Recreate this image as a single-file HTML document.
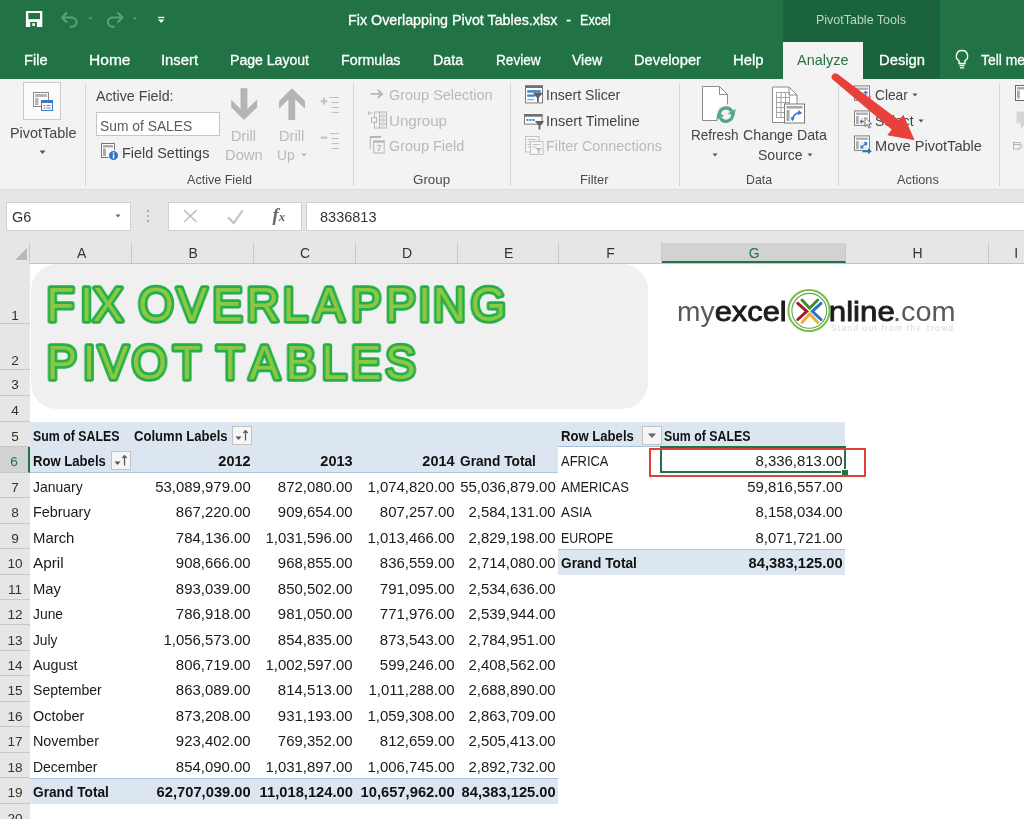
<!DOCTYPE html>
<html><head><meta charset="utf-8"><title>Fix Overlapping Pivot Tables.xlsx - Excel</title>
<style>
html,body{margin:0;padding:0;}
body{width:1024px;height:819px;overflow:hidden;position:relative;background:#fff;font-family:"Liberation Sans",sans-serif;color:#222;}
.a{position:absolute;white-space:nowrap;}
.sep{position:absolute;top:83px;width:1px;height:102.5px;background:#d6d6d6;}
.ch{position:absolute;top:243px;height:19.5px;line-height:21.5px;padding-left:2px;font-size:14px;color:#333;text-align:center;border-right:1px solid #c8c8c8;box-sizing:border-box;}
.rh{position:absolute;left:0;width:30px;text-align:center;font-size:13.6px;color:#333;border-bottom:1px solid #c8c8c8;box-sizing:border-box;background:#e6e6e6;}
.c{position:absolute;font-size:14.5px;line-height:26px;height:26px;white-space:nowrap;color:#1a1a1a;}
.r{text-align:right;}
.b{font-weight:bold;color:#111;}
.band{position:absolute;background:#dce6f1;}
</style></head><body><div id="app" style="position:absolute;left:0;top:0;width:1024px;height:819px;overflow:hidden;will-change:transform;">

<div class="a" style="left:0;top:0;width:1024px;height:78.500px;background:#217346"></div>
<div class="a" style="left:782.500px;top:0;width:157.500px;height:78.500px;background:#1a633c"></div>
<div class="a" style="left:782.500px;top:41.700px;width:80.500px;height:37.300px;background:#f3f3f3"></div>
<svg class="a" style="left:20px;top:6px" width="150" height="26" viewBox="20 6 150 26">
<rect x="25.900" y="11" width="16.400" height="16" fill="#fff"/><rect x="28.300" y="13" width="11.700" height="6.200" fill="#217346"/><rect x="30.200" y="22" width="6.700" height="5" fill="#217346"/><rect x="32.300" y="23.200" width="2.600" height="2.700" fill="#fff"/>
<g fill="none" stroke="#5f9f7d" stroke-width="2" stroke-linecap="round" stroke-linejoin="round"><path d="M66.500 13l-4.500 4.500 4.500 4.500"/><path d="M62.500 17.500h9.500a4.600 4.600 0 0 1 0 9.200h-1.500"/>
<path d="M118 13l4.500 4.500-4.500 4.500"/><path d="M122 17.500h-9.500a4.600 4.600 0 0 0 0 9.200h1.500"/></g>
<path d="M88.300 17.500h4.200l-2.100 2.300z" fill="#5f9f7d"/><path d="M132.900 17.500h4.200l-2.100 2.300z" fill="#5f9f7d"/>
<rect x="158" y="16.800" width="6.400" height="1.300" fill="#fff"/><path d="M158 19.500h6.400l-3.200 3.500z" fill="#fff"/>
</svg>
<svg class="a" style="left:953px;top:48px" width="18" height="24" viewBox="0 0 18 24"><path d="M9 2.500a5.500 5.500 0 0 0-3 10.200v2.800h6v-2.800a5.500 5.500 0 0 0-3-10.200z" fill="none" stroke="#fff" stroke-width="1.400"/><path d="M6.500 17.500h5M7 19.800h4" stroke="#fff" stroke-width="1.300"/></svg>
<div class="a" style="left:0;top:78.500px;width:1024px;height:110.500px;background:#f3f3f3"></div>
<div class="a" style="left:0;top:188.500px;width:1024px;height:1px;background:#dcdcdc"></div>
<div class="a" style="left:0;top:189.500px;width:1024px;height:74px;background:#e6e6e6"></div>
<div class="sep" style="left:85px"></div>
<div class="sep" style="left:352.5px"></div>
<div class="sep" style="left:509.5px"></div>
<div class="sep" style="left:679px"></div>
<div class="sep" style="left:838px"></div>
<div class="sep" style="left:998.5px"></div>
<div class="a" style="left:23.300px;top:82.200px;width:37.400px;height:37.400px;border:1px solid #cbcbcb;background:#fbfbfb;box-sizing:border-box"></div>
<svg class="a" style="left:32px;top:91px" width="22" height="22" viewBox="0 0 22 22"><rect x="1.500" y="1.500" width="15" height="14" fill="#fff" stroke="#8a8a8a"/><rect x="3" y="3" width="12" height="3" fill="#b5b5b5"/><rect x="3" y="7" width="3.500" height="7" fill="#b5b5b5"/><rect x="9.500" y="9.500" width="11" height="10" fill="#fff" stroke="#3b78c4"/><rect x="9.500" y="9.500" width="11" height="2.500" fill="#3b78c4"/><path d="M11.500 14.500h2M14.500 14.500h4M11.500 17h2M14.500 17h4" stroke="#7a7a7a"/></svg>
<svg class="a" style="left:39px;top:150px" width="8" height="5"><path d="M0.500 0.500h6l-3 3.500z" fill="#555"/></svg>
<div class="a" style="left:96px;top:112px;width:124px;height:24px;border:1px solid #c6c6c6;background:#fff;box-sizing:border-box"></div>
<svg class="a" style="left:100px;top:142px" width="20" height="20" viewBox="0 0 20 20"><rect x="1.500" y="1.500" width="13" height="14" fill="#fff" stroke="#777"/><rect x="3" y="3" width="10" height="2.500" fill="#aaa"/><rect x="3" y="6.500" width="3" height="7.500" fill="#aaa"/><circle cx="13.500" cy="13.500" r="5" fill="#2f74c0" stroke="#fff"/><rect x="12.800" y="12.500" width="1.500" height="4" fill="#fff"/><rect x="12.800" y="10.300" width="1.500" height="1.500" fill="#fff"/></svg>
<svg class="a" style="left:225px;top:84px" width="90" height="40" viewBox="225 84 90 40"><polygon points="240.5,88.2 247.4,88.2 247.4,108.9 257.1,99.5 257.1,107.3 244.0,120.0 231.2,107.3 231.2,99.5 240.5,108.9" fill="#b4b4b4"/><polygon points="288.4,120.0 295.2,120.0 295.2,99.3 305.0,108.7 305.0,100.9 291.9,88.2 279.1,100.9 279.1,108.7 288.4,99.3" fill="#b4b4b4"/></svg>
<svg class="a" style="left:300.800px;top:153px" width="8" height="5"><path d="M0.500 0.500h5l-2.500 3z" fill="#b5b5b5"/></svg>
<svg class="a" style="left:318px;top:92px" width="24" height="60" viewBox="318 92 24 60"><g stroke="#c0c0c0" fill="none"><path d="M320.700 101.300h6.600M324 98v6.600" stroke-width="2"/><path d="M329.500 97.500h9.500M331.500 102.500h7.500M331.500 107.500h7.500M331.500 112.500h7.500"/><path d="M320.700 137.600h6.600" stroke-width="2"/><path d="M329.500 133.500h9.500M331.500 138.500h7.500M331.500 143.500h7.500M331.500 148.500h7.500"/></g></svg>
<svg class="a" style="left:364px;top:84px" width="28" height="74" viewBox="364 84 28 74"><g fill="none" stroke="#b6b6b6"><path d="M370.500 93.900h10.500M377.800 89.900l4.200 4-4.200 4" stroke-width="1.900"/><rect x="374.500" y="112" width="12" height="16"/><path d="M379.500 112v16M379.500 116h7M379.500 120h7M379.500 124h7"/><path d="M381.500 114h3M381.500 118h3M381.500 122h3M381.500 126h3" stroke-width=".7"/><rect x="371.500" y="117.700" width="5" height="4.600" fill="#f3f3f3"/><path d="M368 113h4.500M369.800 111.200l-1.800 1.800 1.800 1.800"/><path d="M370.300 149v-12h10.500"/><path d="M370 137h11" stroke-width="2"/><rect x="373.700" y="141" width="10.500" height="12"/><path d="M373.500 141.700h11" stroke-width="2"/></g><text x="379" y="151.300" font-size="8.500" font-weight="bold" text-anchor="middle" fill="#b0b0b0" font-family="Liberation Sans, sans-serif">7</text></svg>
<svg class="a" style="left:520px;top:82px" width="28" height="76" viewBox="520 82 28 76"><rect x="525.500" y="85.900" width="17" height="17" fill="#fff" stroke="#7a7a7a"/><rect x="525" y="85.400" width="18" height="2.600" fill="#707070"/><rect x="527.200" y="90.200" width="13.500" height="2.400" fill="#3d7fc9"/><rect x="527.200" y="94.500" width="8" height="2.200" fill="#3d7fc9"/><rect x="527.200" y="98.800" width="7" height="1.600" fill="#8db4e0"/><path d="M532.800 92.700h10.200l-4.200 5v4.600h-1.800v-4.600z" fill="#606060"/>
<rect x="524.500" y="114.600" width="17.500" height="9.500" fill="#fff" stroke="#7a7a7a"/><rect x="524" y="114.100" width="18.500" height="2.600" fill="#707070"/><path d="M526.500 120h2M529.500 120h2M532.500 120h2" stroke="#3d7fc9" stroke-width="1.800"/><path d="M534.800 121h9.400l-3.800 4.400v4h-1.800v-4z" fill="#606060"/>
<g fill="#f7f7f7" stroke="#c2c2c2"><rect x="525.500" y="136.500" width="13.500" height="15.500"/><path d="M527.500 139.500h9M527.500 142h3M527.500 144.500h3M527.500 147h3" fill="none"/><rect x="530.500" y="141.500" width="12.500" height="13"/></g><path d="M532.500 144.500h8M532.500 147h4" stroke="#c2c2c2" fill="none"/><path d="M535.500 148h6.500l-2.600 3v2.800h-1.300v-2.800z" fill="#bdbdbd"/></svg>
<svg class="a" style="left:695px;top:82px" width="120" height="46" viewBox="695 82 120 46"><path d="M702.500 86.500h17l8 8v26h-25z" fill="#fff" stroke="#8c8c8c"/><path d="M719.500 86.500v8h8" fill="none" stroke="#8c8c8c"/><circle cx="726.0" cy="114.6" r="10.500" fill="#f3f3f3"/><g fill="none" stroke="#52a78a" stroke-width="3.200"><path d="M719.4 114.0A6.6 6.6 0 0 1 731.7 111.3"/><path d="M732.6 115.2A6.6 6.6 0 0 1 720.3 117.9"/></g><path d="M735.7 109.0L727.7 113.6L734.5 116.1z" fill="#52a78a"/><path d="M716.3 120.2L724.3 115.6L717.5 113.1z" fill="#52a78a"/>
<path d="M772.500 87h16.500l8 8v27.500h-24.500z" fill="#fff" stroke="#8c8c8c"/><path d="M789 87v8h8" fill="none" stroke="#8c8c8c"/><g stroke="#a5a5a5" fill="none"><rect x="776.500" y="92.500" width="13" height="25"/><path d="M776.500 97.500h13M776.500 102.500h13M776.500 107.500h13M776.500 112.500h13M781 92.500v25M785.500 92.500v25"/></g><rect x="784.500" y="104" width="20" height="19" fill="#fff" stroke="#7a7a7a"/><rect x="786.500" y="106" width="16" height="2.600" fill="#a8a8a8"/><rect x="786.500" y="110" width="3" height="11" fill="#a8a8a8"/><path d="M792.500 119.500c0.500-4.500 4-7 8-6.500" fill="none" stroke="#3477c6" stroke-width="1.700"/><path d="M798.500 110l3.800 3.200-4.600 1.900z M790.400 117.200l4.300 0.600-2.400 3.800z" fill="#3477c6"/></svg>
<svg class="a" style="left:712.300px;top:153.400px" width="8" height="5"><path d="M0.500 0.500h5l-2.500 3z" fill="#555"/></svg>
<svg class="a" style="left:807px;top:153px" width="8" height="5"><path d="M0.500 0.500h5l-2.500 3z" fill="#555"/></svg>
<svg class="a" style="left:853.3px;top:84.5px" width="22" height="22" viewBox="0 0 22 22"><rect x="1.500" y="0.900" width="15" height="14.500" fill="#fbfbfb" stroke="#808080"/><rect x="3" y="2.600" width="12" height="2.300" fill="#b0b0b0"/><rect x="3" y="6" width="2.800" height="8" fill="#b0b0b0"/><path d="M7 8h8M7 10.500h8M7 13h8" stroke="#d4d4d4" stroke-width=".8"/><path d="M12.700 11V6.500M10.800 8.300l1.900-1.900 1.900 1.900" fill="none" stroke="#3a7bc8" stroke-width="1.200"/><path d="M15.500 11l2.500 2.500M18 11l-2.500 2.500" stroke="#e06a86" stroke-width="1.200"/></svg>
<svg class="a" style="left:853.3px;top:110.3px" width="22" height="22" viewBox="0 0 22 22"><rect x="1.500" y="0.900" width="15" height="14.500" fill="#fbfbfb" stroke="#808080"/><rect x="3" y="2.600" width="12" height="2.300" fill="#b0b0b0"/><rect x="3" y="6" width="2.800" height="8" fill="#b0b0b0"/><path d="M7 8h8M7 10.500h8M7 13h8" stroke="#d4d4d4" stroke-width=".8"/><path d="M7.500 11.500h3.500M9.300 9.700l-1.800 1.800 1.800 1.800" fill="none" stroke="#3a7bc8" stroke-width="1.200"/><path d="M12 7.500v9l2.200-2 1.700 3.600 1.500-.7-1.700-3.500h3z" fill="#fff" stroke="#666" stroke-width=".9"/></svg>
<svg class="a" style="left:853.3px;top:135.2px" width="22" height="22" viewBox="0 0 22 22"><rect x="1.500" y="0.900" width="15" height="14.500" fill="#fbfbfb" stroke="#808080"/><rect x="3" y="2.600" width="12" height="2.300" fill="#b0b0b0"/><rect x="3" y="6" width="2.800" height="8" fill="#b0b0b0"/><path d="M7 8h8M7 10.500h8M7 13h8" stroke="#d4d4d4" stroke-width=".8"/><path d="M8 13l5.500-5.500M8 10.500v2.500h2.500M11 7.500h2.500v2.500" fill="none" stroke="#3a7bc8" stroke-width="1.200"/><path d="M9.500 16.300h7" stroke="#2e75b6" stroke-width="2"/><path d="M15 13.300l3.800 3-3.800 3z" fill="#2e75b6"/></svg>
<svg class="a" style="left:912.200px;top:93px" width="8" height="5"><path d="M0.500 0.500h5l-2.500 3z" fill="#555"/></svg>
<svg class="a" style="left:918px;top:118.700px" width="8" height="5"><path d="M0.500 0.500h5l-2.500 3z" fill="#555"/></svg>
<svg class="a" style="left:1010px;top:82px" width="14" height="72" viewBox="1010 82 14 72"><rect x="1015.500" y="85.500" width="14" height="15" fill="#fff" stroke="#666"/><rect x="1017" y="87" width="10" height="2.500" fill="#aaa"/><rect x="1017" y="90.500" width="2.800" height="8" fill="#aaa"/><rect x="1016.500" y="111.500" width="9" height="12" fill="#d6d6d6"/><path d="M1021 123.500v5l4-5z" fill="#c9c9c9"/><rect x="1013.500" y="142.500" width="6.500" height="6.500" fill="#f3f3f3" stroke="#b5b5b5"/><path d="M1013.500 144.500h6.500" stroke="#b5b5b5"/><path d="M1022 144v4" stroke="#c5c5c5"/></svg>
<div class="a" style="left:348.1px;top:9.9px;font-size:14.4px;line-height:20px;color:#fff;-webkit-text-stroke:0.3px #fff;transform:scaleX(0.993);transform-origin:left center;">Fix Overlapping Pivot Tables.xlsx</div>
<div class="a" style="left:566.3px;top:9.9px;font-size:14.4px;line-height:20px;color:#fff;-webkit-text-stroke:0.3px #fff;">-</div>
<div class="a" style="left:579.6px;top:9.9px;font-size:14.4px;line-height:20px;color:#fff;-webkit-text-stroke:0.3px #fff;transform:scaleX(0.875);transform-origin:left center;">Excel</div>
<div class="a" style="left:816.3px;top:9.8px;font-size:12.6px;line-height:20px;color:#bcd5c6;transform:scaleX(0.991);transform-origin:left center;">PivotTable Tools</div>
<div class="a" style="left:24.3px;top:49.8px;font-size:15px;line-height:20px;color:#fff;-webkit-text-stroke:0.3px #fff;transform:scaleX(0.972);transform-origin:left center;">File</div>
<div class="a" style="left:88.8px;top:49.8px;font-size:15px;line-height:20px;color:#fff;-webkit-text-stroke:0.3px #fff;transform:scaleX(1.037);transform-origin:left center;">Home</div>
<div class="a" style="left:161.3px;top:49.8px;font-size:15px;line-height:20px;color:#fff;-webkit-text-stroke:0.3px #fff;transform:scaleX(0.986);transform-origin:left center;">Insert</div>
<div class="a" style="left:229.8px;top:49.8px;font-size:15px;line-height:20px;color:#fff;-webkit-text-stroke:0.3px #fff;transform:scaleX(0.938);transform-origin:left center;">Page Layout</div>
<div class="a" style="left:340.8px;top:49.8px;font-size:15px;line-height:20px;color:#fff;-webkit-text-stroke:0.3px #fff;transform:scaleX(0.952);transform-origin:left center;">Formulas</div>
<div class="a" style="left:433.1px;top:49.8px;font-size:15px;line-height:20px;color:#fff;-webkit-text-stroke:0.3px #fff;transform:scaleX(0.953);transform-origin:left center;">Data</div>
<div class="a" style="left:495.5px;top:49.8px;font-size:15px;line-height:20px;color:#fff;-webkit-text-stroke:0.3px #fff;transform:scaleX(0.907);transform-origin:left center;">Review</div>
<div class="a" style="left:572.3px;top:49.8px;font-size:15px;line-height:20px;color:#fff;-webkit-text-stroke:0.3px #fff;transform:scaleX(0.937);transform-origin:left center;">View</div>
<div class="a" style="left:634.3px;top:49.8px;font-size:15px;line-height:20px;color:#fff;-webkit-text-stroke:0.3px #fff;transform:scaleX(0.980);transform-origin:left center;">Developer</div>
<div class="a" style="left:732.8px;top:49.8px;font-size:15px;line-height:20px;color:#fff;-webkit-text-stroke:0.3px #fff;transform:scaleX(0.989);transform-origin:left center;">Help</div>
<div class="a" style="left:878.8px;top:49.8px;font-size:15px;line-height:20px;color:#fff;-webkit-text-stroke:0.3px #fff;transform:scaleX(0.985);transform-origin:left center;">Design</div>
<div class="a" style="left:981.3px;top:49.8px;font-size:15px;line-height:20px;color:#fff;-webkit-text-stroke:0.3px #fff;transform:scaleX(0.926);transform-origin:left center;">Tell me</div>
<div class="a" style="left:796.8px;top:49.8px;font-size:15px;line-height:20px;color:#217346;transform:scaleX(0.965);transform-origin:left center;">Analyze</div>
<div class="a" style="left:9.5px;top:123.3px;font-size:15px;line-height:20px;color:#444;transform:scaleX(0.962);transform-origin:left center;">PivotTable</div>
<div class="a" style="left:96.0px;top:85.7px;font-size:15px;line-height:20px;color:#444;transform:scaleX(0.949);transform-origin:left center;">Active Field:</div>
<div class="a" style="left:99.9px;top:115.5px;font-size:15px;line-height:20px;color:#5a5a5a;transform:scaleX(0.922);transform-origin:left center;">Sum of SALES</div>
<div class="a" style="left:122.3px;top:142.5px;font-size:15px;line-height:20px;color:#444;transform:scaleX(0.961);transform-origin:left center;">Field Settings</div>
<div class="a" style="left:231.1px;top:125.7px;font-size:15px;line-height:20px;color:#b9b9b9;transform:scaleX(0.968);transform-origin:left center;">Drill</div>
<div class="a" style="left:224.6px;top:144.8px;font-size:15px;line-height:20px;color:#b9b9b9;transform:scaleX(0.983);transform-origin:left center;">Down</div>
<div class="a" style="left:278.5px;top:125.7px;font-size:15px;line-height:20px;color:#b9b9b9;transform:scaleX(0.976);transform-origin:left center;">Drill</div>
<div class="a" style="left:277.0px;top:144.8px;font-size:15px;line-height:20px;color:#b9b9b9;transform:scaleX(0.918);transform-origin:left center;">Up</div>
<div class="a" style="left:389.3px;top:85.0px;font-size:15px;line-height:20px;color:#b9b9b9;transform:scaleX(0.963);transform-origin:left center;">Group Selection</div>
<div class="a" style="left:389.3px;top:111.0px;font-size:15px;line-height:20px;color:#b9b9b9;transform:scaleX(1.008);transform-origin:left center;">Ungroup</div>
<div class="a" style="left:389.3px;top:135.8px;font-size:15px;line-height:20px;color:#b9b9b9;transform:scaleX(0.961);transform-origin:left center;">Group Field</div>
<div class="a" style="left:546.4px;top:85.0px;font-size:15px;line-height:20px;color:#444;transform:scaleX(0.938);transform-origin:left center;">Insert Slicer</div>
<div class="a" style="left:546.4px;top:111.0px;font-size:15px;line-height:20px;color:#444;transform:scaleX(0.962);transform-origin:left center;">Insert Timeline</div>
<div class="a" style="left:546.4px;top:135.8px;font-size:15px;line-height:20px;color:#b9b9b9;transform:scaleX(0.959);transform-origin:left center;">Filter Connections</div>
<div class="a" style="left:691.2px;top:125.3px;font-size:15px;line-height:20px;color:#444;transform:scaleX(0.904);transform-origin:left center;">Refresh</div>
<div class="a" style="left:742.5px;top:125.3px;font-size:15px;line-height:20px;color:#444;transform:scaleX(0.950);transform-origin:left center;">Change Data</div>
<div class="a" style="left:757.6px;top:144.8px;font-size:15px;line-height:20px;color:#444;transform:scaleX(0.936);transform-origin:left center;">Source</div>
<div class="a" style="left:874.9px;top:85.0px;font-size:15px;line-height:20px;color:#444;transform:scaleX(0.915);transform-origin:left center;">Clear</div>
<div class="a" style="left:874.9px;top:110.6px;font-size:15px;line-height:20px;color:#444;transform:scaleX(0.928);transform-origin:left center;">Select</div>
<div class="a" style="left:875.2px;top:135.7px;font-size:15px;line-height:20px;color:#444;transform:scaleX(0.972);transform-origin:left center;">Move PivotTable</div>
<div class="a" style="left:186.7px;top:169.8px;font-size:13px;line-height:20px;color:#4a4a4a;transform:scaleX(0.966);transform-origin:left center;">Active Field</div>
<div class="a" style="left:412.8px;top:169.8px;font-size:13px;line-height:20px;color:#4a4a4a;transform:scaleX(1.027);transform-origin:left center;">Group</div>
<div class="a" style="left:580.0px;top:169.8px;font-size:13px;line-height:20px;color:#4a4a4a;transform:scaleX(0.987);transform-origin:left center;">Filter</div>
<div class="a" style="left:745.5px;top:169.8px;font-size:13px;line-height:20px;color:#4a4a4a;transform:scaleX(0.947);transform-origin:left center;">Data</div>
<div class="a" style="left:897.3px;top:169.8px;font-size:13px;line-height:20px;color:#4a4a4a;transform:scaleX(0.981);transform-origin:left center;">Actions</div>
<svg class="a" style="left:820px;top:64px" width="110" height="90" viewBox="820 64 110 90"><path d="M832.6 79.6L892.3 130.0L899.7 120.8L837.2 73.8A3.75 3.75 0 0 0 832.6 79.6z" fill="#e8403a"/><path d="M914 139.700L903.200 115.300 887.900 134.900z" fill="#e8403a" stroke="#e8403a" stroke-width="0.800" stroke-linejoin="round"/></svg>
<div class="a" style="left:6px;top:201.700px;width:124.500px;height:29px;background:#fff;border:1px solid #d0d0d0;box-sizing:border-box"></div>
<div class="a" style="left:12px;top:208px;font-size:14.5px;line-height:18px;color:#333">G6</div>
<svg class="a" style="left:115px;top:214px" width="8" height="5"><path d="M0.500 0.500h5l-2.500 3z" fill="#666"/></svg>
<div class="a" style="left:147px;top:210px;width:2px;height:2px;background:#aaa"></div><div class="a" style="left:147px;top:215px;width:2px;height:2px;background:#aaa"></div><div class="a" style="left:147px;top:220px;width:2px;height:2px;background:#aaa"></div>
<div class="a" style="left:168px;top:201.700px;width:134px;height:29px;background:#fff;border:1px solid #d0d0d0;box-sizing:border-box"></div>
<svg class="a" style="left:170px;top:204px" width="130" height="26" viewBox="170 204 130 26"><path d="M184 210.200l12.600 11.800M196.600 210.200L184 222" stroke="#c0c0c0" stroke-width="1.600" fill="none"/><path d="M227.800 217.300l6 5.700 8.700-12.700" stroke="#c4c4c4" stroke-width="2.200" fill="none"/><text x="272.500" y="221" font-family="Liberation Serif, serif" font-style="italic" font-weight="bold" font-size="18.500" fill="#666">f</text><text x="278.800" y="221" font-family="Liberation Serif, serif" font-style="italic" font-weight="bold" font-size="13" fill="#666">x</text></svg>
<div class="a" style="left:306px;top:201.700px;width:720px;height:29px;background:#fff;border:1px solid #d0d0d0;box-sizing:border-box"></div>
<div class="a" style="left:320px;top:208px;font-size:14.5px;line-height:18px;color:#333">8336813</div>
<div class="a" style="left:0;top:262.500px;width:1024px;height:1px;background:#c4c4c4"></div>
<svg class="a" style="left:13.500px;top:247px" width="14" height="14"><path d="M13 1v12H1z" fill="#b8b8b8"/></svg>
<div class="a" style="left:29px;top:243px;width:1px;height:19px;background:#c8c8c8"></div>
<div class="ch" style="left:30.6px;width:101px;">A</div>
<div class="ch" style="left:131.6px;width:122px;">B</div>
<div class="ch" style="left:253.6px;width:102px;">C</div>
<div class="ch" style="left:355.6px;width:102px;">D</div>
<div class="ch" style="left:457.6px;width:101px;">E</div>
<div class="ch" style="left:558.6px;width:103px;">F</div>
<div class="ch" style="left:661.6px;width:184px;background:#d2d2d2;color:#217346;border-bottom:2px solid #217346;height:20.300px;">G</div>
<div class="ch" style="left:845.6px;width:143px;">H</div>
<div class="ch" style="left:988.6px;width:54px;">I</div>
<div class="a" style="left:0;top:263px;width:30px;height:556px;background:#e6e6e6;border-right:1px solid #c8c8c8;box-sizing:border-box"></div>
<div class="rh" style="top:263.5px;height:60.60000000000002px;line-height:103.2px;">1</div>
<div class="rh" style="top:324.1px;height:46.19999999999999px;line-height:74.4px;">2</div>
<div class="rh" style="top:370.3px;height:25.80000000000001px;line-height:30.0px;">3</div>
<div class="rh" style="top:396.1px;height:25.899999999999977px;line-height:30.2px;">4</div>
<div class="rh" style="top:422.0px;height:25.399999999999977px;line-height:29.0px;">5</div>
<div class="rh" style="top:447.4px;height:25.5px;line-height:29.1px;background:#d2d2d2;color:#217346;border-right:2px solid #217346;">6</div>
<div class="rh" style="top:472.9px;height:25.400000000000034px;line-height:29.0px;">7</div>
<div class="rh" style="top:498.3px;height:25.499999999999943px;line-height:29.1px;">8</div>
<div class="rh" style="top:523.8px;height:25.40000000000009px;line-height:29.0px;">9</div>
<div class="rh" style="top:549.2px;height:25.399999999999977px;line-height:29.0px;">10</div>
<div class="rh" style="top:574.6px;height:25.5px;line-height:29.1px;">11</div>
<div class="rh" style="top:600.1px;height:25.399999999999977px;line-height:29.0px;">12</div>
<div class="rh" style="top:625.5px;height:25.5px;line-height:29.1px;">13</div>
<div class="rh" style="top:651.0px;height:25.399999999999977px;line-height:29.0px;">14</div>
<div class="rh" style="top:676.4px;height:25.399999999999977px;line-height:29.0px;">15</div>
<div class="rh" style="top:701.8px;height:25.5px;line-height:29.1px;">16</div>
<div class="rh" style="top:727.3px;height:25.40000000000009px;line-height:29.0px;">17</div>
<div class="rh" style="top:752.7px;height:25.5px;line-height:29.1px;">18</div>
<div class="rh" style="top:778.2px;height:25.399999999999977px;line-height:29.0px;">19</div>
<div class="rh" style="top:803.6px;height:25.399999999999977px;line-height:29.0px;">20</div>
<div class="a" style="left:30.500px;top:264px;width:617.500px;height:144.500px;background:#f0f0f0;border-radius:26px"></div>
<svg class="a" style="left:30px;top:263px" width="630" height="150" viewBox="30 263 630 150"><g transform="scale(0.93,1)" font-family="Liberation Sans, sans-serif" font-size="49" stroke-linejoin="round" stroke-linecap="round"><g fill="#8cc843" stroke="#22b04a" stroke-width="5.600" paint-order="stroke"><text x="49.9 86.2 99.8 144.5 148.8 189.9 228.2 265.0 304.0 337.3 377.5 414.4 449.7 465.6 505.9" y="321.3">FIX OVERLAPPING</text><text x="50.3 89.0 105.6 141.5 185.9 227.8 232.4 268.0 307.2 345.7 377.3 414.3" y="379">PIVOT TABLES</text></g></g></svg>
<svg class="a" style="left:670px;top:280px" width="300" height="70" viewBox="670 280 300 70"><g font-family="Liberation Sans, sans-serif" font-size="28.500"><text x="677" y="321" textLength="37.500" lengthAdjust="spacingAndGlyphs" fill="#5a5a5a">my</text><text x="714.700" y="321" textLength="72" lengthAdjust="spacingAndGlyphs" fill="#1c1c1c" stroke="#1c1c1c" stroke-width="0.900">excel</text><text x="828.800" y="321" textLength="66" lengthAdjust="spacingAndGlyphs" fill="#1c1c1c" stroke="#1c1c1c" stroke-width="0.900">nline</text><text x="893" y="321" textLength="62.500" lengthAdjust="spacingAndGlyphs" fill="#5a5a5a">.com</text></g><text x="831" y="331" font-family="Liberation Sans, sans-serif" font-size="8.500" textLength="122" lengthAdjust="spacing" fill="#cfe3cc">Stand out from the crowd</text>
<circle cx="809" cy="310.500" r="20.600" fill="#fff" stroke="#79bf45" stroke-width="2"/><circle cx="809.300" cy="310.800" r="17.400" fill="none" stroke="#5ea35c" stroke-width="1.100"/><g fill="none" stroke-width="3" stroke-linecap="round" stroke-linejoin="miter"><path d="M797.800 303.300l9 8-9 8.200" stroke="#a51b27"/><path d="M821 303.300l-8.700 8 8.700 8.200" stroke="#2179c2"/><path d="M802 300l7.600 8.200 8.200-8.200" stroke="#3d8c2c"/><path d="M802 322.400l7.600-8.400 8.200 8.400" stroke="#edb033"/></g></svg>
<div class="band" style="left:30px;top:422.0px;width:528px;height:50.89999999999998px"></div>
<div class="band" style="left:30px;top:778.2px;width:528px;height:25.399999999999977px;border-top:1px solid #a9c1e0;box-sizing:border-box"></div>
<div class="band" style="left:558px;top:422.0px;width:287px;height:25.399999999999977px;border-bottom:1px solid #a9c1e0;box-sizing:border-box"></div>
<div class="band" style="left:558px;top:549.2px;width:287px;height:25.399999999999977px;border-top:1px solid #a9c1e0;box-sizing:border-box"></div>
<div class="a" style="left:30px;top:471.9px;width:528px;height:1px;background:#aec4e0"></div>
<div class="c b" style="left:32.5px;top:423.0px;transform:scaleX(0.851);transform-origin:left center;">Sum of SALES</div>
<div class="c b" style="left:133.5px;top:423.0px;transform:scaleX(0.901);transform-origin:left center;">Column Labels</div>
<div class="c b" style="left:32.5px;top:448.4px;transform:scaleX(0.904);transform-origin:left center;">Row Labels</div>
<div class="c r b" style="right:773.4px;top:448.4px;transform:scaleX(1.0);transform-origin:right center;">2012</div>
<div class="c r b" style="right:671.4px;top:448.4px;transform:scaleX(1.0);transform-origin:right center;">2013</div>
<div class="c r b" style="right:569.4px;top:448.4px;transform:scaleX(1.0);transform-origin:right center;">2014</div>
<div class="c b" style="left:459.5px;top:448.4px;transform:scaleX(0.945);transform-origin:left center;">Grand Total</div>
<div class="c" style="left:32.5px;top:473.9px;transform:scaleX(0.962);transform-origin:left center;">January</div>
<div class="c r" style="right:773.4px;top:473.9px;transform:scaleX(1.03);transform-origin:right center;">53,089,979.00</div>
<div class="c r" style="right:671.4px;top:473.9px;transform:scaleX(1.03);transform-origin:right center;">872,080.00</div>
<div class="c r" style="right:569.4px;top:473.9px;transform:scaleX(1.03);transform-origin:right center;">1,074,820.00</div>
<div class="c r" style="right:468.4px;top:473.9px;transform:scaleX(1.03);transform-origin:right center;">55,036,879.00</div>
<div class="c" style="left:32.5px;top:499.3px;transform:scaleX(0.993);transform-origin:left center;">February</div>
<div class="c r" style="right:773.4px;top:499.3px;transform:scaleX(1.03);transform-origin:right center;">867,220.00</div>
<div class="c r" style="right:671.4px;top:499.3px;transform:scaleX(1.03);transform-origin:right center;">909,654.00</div>
<div class="c r" style="right:569.4px;top:499.3px;transform:scaleX(1.03);transform-origin:right center;">807,257.00</div>
<div class="c r" style="right:468.4px;top:499.3px;transform:scaleX(1.03);transform-origin:right center;">2,584,131.00</div>
<div class="c" style="left:32.5px;top:524.8px;transform:scaleX(1.028);transform-origin:left center;">March</div>
<div class="c r" style="right:773.4px;top:524.8px;transform:scaleX(1.03);transform-origin:right center;">784,136.00</div>
<div class="c r" style="right:671.4px;top:524.8px;transform:scaleX(1.03);transform-origin:right center;">1,031,596.00</div>
<div class="c r" style="right:569.4px;top:524.8px;transform:scaleX(1.03);transform-origin:right center;">1,013,466.00</div>
<div class="c r" style="right:468.4px;top:524.8px;transform:scaleX(1.03);transform-origin:right center;">2,829,198.00</div>
<div class="c" style="left:32.5px;top:550.2px;transform:scaleX(1.058);transform-origin:left center;">April</div>
<div class="c r" style="right:773.4px;top:550.2px;transform:scaleX(1.03);transform-origin:right center;">908,666.00</div>
<div class="c r" style="right:671.4px;top:550.2px;transform:scaleX(1.03);transform-origin:right center;">968,855.00</div>
<div class="c r" style="right:569.4px;top:550.2px;transform:scaleX(1.03);transform-origin:right center;">836,559.00</div>
<div class="c r" style="right:468.4px;top:550.2px;transform:scaleX(1.03);transform-origin:right center;">2,714,080.00</div>
<div class="c" style="left:32.5px;top:575.6px;transform:scaleX(1.022);transform-origin:left center;">May</div>
<div class="c r" style="right:773.4px;top:575.6px;transform:scaleX(1.03);transform-origin:right center;">893,039.00</div>
<div class="c r" style="right:671.4px;top:575.6px;transform:scaleX(1.03);transform-origin:right center;">850,502.00</div>
<div class="c r" style="right:569.4px;top:575.6px;transform:scaleX(1.03);transform-origin:right center;">791,095.00</div>
<div class="c r" style="right:468.4px;top:575.6px;transform:scaleX(1.03);transform-origin:right center;">2,534,636.00</div>
<div class="c" style="left:32.5px;top:601.1px;transform:scaleX(0.957);transform-origin:left center;">June</div>
<div class="c r" style="right:773.4px;top:601.1px;transform:scaleX(1.03);transform-origin:right center;">786,918.00</div>
<div class="c r" style="right:671.4px;top:601.1px;transform:scaleX(1.03);transform-origin:right center;">981,050.00</div>
<div class="c r" style="right:569.4px;top:601.1px;transform:scaleX(1.03);transform-origin:right center;">771,976.00</div>
<div class="c r" style="right:468.4px;top:601.1px;transform:scaleX(1.03);transform-origin:right center;">2,539,944.00</div>
<div class="c" style="left:32.5px;top:626.5px;transform:scaleX(0.946);transform-origin:left center;">July</div>
<div class="c r" style="right:773.4px;top:626.5px;transform:scaleX(1.03);transform-origin:right center;">1,056,573.00</div>
<div class="c r" style="right:671.4px;top:626.5px;transform:scaleX(1.03);transform-origin:right center;">854,835.00</div>
<div class="c r" style="right:569.4px;top:626.5px;transform:scaleX(1.03);transform-origin:right center;">873,543.00</div>
<div class="c r" style="right:468.4px;top:626.5px;transform:scaleX(1.03);transform-origin:right center;">2,784,951.00</div>
<div class="c" style="left:32.5px;top:652.0px;transform:scaleX(0.988);transform-origin:left center;">August</div>
<div class="c r" style="right:773.4px;top:652.0px;transform:scaleX(1.03);transform-origin:right center;">806,719.00</div>
<div class="c r" style="right:671.4px;top:652.0px;transform:scaleX(1.03);transform-origin:right center;">1,002,597.00</div>
<div class="c r" style="right:569.4px;top:652.0px;transform:scaleX(1.03);transform-origin:right center;">599,246.00</div>
<div class="c r" style="right:468.4px;top:652.0px;transform:scaleX(1.03);transform-origin:right center;">2,408,562.00</div>
<div class="c" style="left:32.5px;top:677.4px;transform:scaleX(0.970);transform-origin:left center;">September</div>
<div class="c r" style="right:773.4px;top:677.4px;transform:scaleX(1.03);transform-origin:right center;">863,089.00</div>
<div class="c r" style="right:671.4px;top:677.4px;transform:scaleX(1.03);transform-origin:right center;">814,513.00</div>
<div class="c r" style="right:569.4px;top:677.4px;transform:scaleX(1.03);transform-origin:right center;">1,011,288.00</div>
<div class="c r" style="right:468.4px;top:677.4px;transform:scaleX(1.03);transform-origin:right center;">2,688,890.00</div>
<div class="c" style="left:32.5px;top:702.8px;transform:scaleX(0.997);transform-origin:left center;">October</div>
<div class="c r" style="right:773.4px;top:702.8px;transform:scaleX(1.03);transform-origin:right center;">873,208.00</div>
<div class="c r" style="right:671.4px;top:702.8px;transform:scaleX(1.03);transform-origin:right center;">931,193.00</div>
<div class="c r" style="right:569.4px;top:702.8px;transform:scaleX(1.03);transform-origin:right center;">1,059,308.00</div>
<div class="c r" style="right:468.4px;top:702.8px;transform:scaleX(1.03);transform-origin:right center;">2,863,709.00</div>
<div class="c" style="left:32.5px;top:728.3px;transform:scaleX(0.987);transform-origin:left center;">November</div>
<div class="c r" style="right:773.4px;top:728.3px;transform:scaleX(1.03);transform-origin:right center;">923,402.00</div>
<div class="c r" style="right:671.4px;top:728.3px;transform:scaleX(1.03);transform-origin:right center;">769,352.00</div>
<div class="c r" style="right:569.4px;top:728.3px;transform:scaleX(1.03);transform-origin:right center;">812,659.00</div>
<div class="c r" style="right:468.4px;top:728.3px;transform:scaleX(1.03);transform-origin:right center;">2,505,413.00</div>
<div class="c" style="left:32.5px;top:753.7px;transform:scaleX(0.964);transform-origin:left center;">December</div>
<div class="c r" style="right:773.4px;top:753.7px;transform:scaleX(1.03);transform-origin:right center;">854,090.00</div>
<div class="c r" style="right:671.4px;top:753.7px;transform:scaleX(1.03);transform-origin:right center;">1,031,897.00</div>
<div class="c r" style="right:569.4px;top:753.7px;transform:scaleX(1.03);transform-origin:right center;">1,006,745.00</div>
<div class="c r" style="right:468.4px;top:753.7px;transform:scaleX(1.03);transform-origin:right center;">2,892,732.00</div>
<div class="c b" style="left:32.5px;top:779.2px;transform:scaleX(0.945);transform-origin:left center;">Grand Total</div>
<div class="c r b" style="right:773.4px;top:779.2px;transform:scaleX(1.015);transform-origin:right center;">62,707,039.00</div>
<div class="c r b" style="right:671.4px;top:779.2px;transform:scaleX(1.015);transform-origin:right center;">11,018,124.00</div>
<div class="c r b" style="right:569.4px;top:779.2px;transform:scaleX(1.015);transform-origin:right center;">10,657,962.00</div>
<div class="c r b" style="right:468.4px;top:779.2px;transform:scaleX(1.015);transform-origin:right center;">84,383,125.00</div>
<div class="c b" style="left:560.5px;top:423.0px;transform:scaleX(0.904);transform-origin:left center;">Row Labels</div>
<div class="c b" style="left:663.5px;top:423.0px;transform:scaleX(0.851);transform-origin:left center;">Sum of SALES</div>
<div class="c" style="left:560.5px;top:448.4px;transform:scaleX(0.893);transform-origin:left center;">AFRICA</div>
<div class="c r" style="right:181.4px;top:448.4px;transform:scaleX(1.03);transform-origin:right center;">8,336,813.00</div>
<div class="c" style="left:560.5px;top:473.9px;transform:scaleX(0.895);transform-origin:left center;">AMERICAS</div>
<div class="c r" style="right:181.4px;top:473.9px;transform:scaleX(1.03);transform-origin:right center;">59,816,557.00</div>
<div class="c" style="left:560.5px;top:499.3px;transform:scaleX(0.929);transform-origin:left center;">ASIA</div>
<div class="c r" style="right:181.4px;top:499.3px;transform:scaleX(1.03);transform-origin:right center;">8,158,034.00</div>
<div class="c" style="left:560.5px;top:524.8px;transform:scaleX(0.854);transform-origin:left center;">EUROPE</div>
<div class="c r" style="right:181.4px;top:524.8px;transform:scaleX(1.03);transform-origin:right center;">8,071,721.00</div>
<div class="c b" style="left:560.5px;top:550.2px;transform:scaleX(0.945);transform-origin:left center;">Grand Total</div>
<div class="c r b" style="right:181.4px;top:550.2px;transform:scaleX(1.015);transform-origin:right center;">84,383,125.00</div>
<svg class="a" style="left:232px;top:425.5px" width="20" height="19" viewBox="0 0 20 19"><rect x="0.500" y="0.500" width="19" height="18" fill="#f6f6f6" stroke="#c2c2c2"/><path d="M3.500 10.500h6l-3 3.500z" fill="#555"/><path d="M13.500 14.500v-9.500M11.300 7l2.200-2.300 2.200 2.300" fill="none" stroke="#5a5a5a" stroke-width="1.300"/></svg>
<svg class="a" style="left:110.5px;top:450.9px" width="20" height="19" viewBox="0 0 20 19"><rect x="0.500" y="0.500" width="19" height="18" fill="#f6f6f6" stroke="#c2c2c2"/><path d="M3.500 10.500h6l-3 3.500z" fill="#555"/><path d="M13.500 14.500v-9.500M11.300 7l2.200-2.300 2.200 2.300" fill="none" stroke="#5a5a5a" stroke-width="1.300"/></svg>
<svg class="a" style="left:641.5px;top:425.5px" width="20" height="19" viewBox="0 0 20 19"><rect x="0.500" y="0.500" width="19" height="18" fill="#f6f6f6" stroke="#c2c2c2"/><path d="M6 7.500h8l-4 4.500z" fill="#666"/></svg>
<div class="a" style="left:660px;top:446.4px;width:186px;height:26.5px;border:2px solid #217346;box-sizing:border-box"></div>
<div class="a" style="left:841px;top:468.9px;width:6px;height:6px;background:#217346;border:1px solid #fff"></div>
<div class="a" style="left:649px;top:448px;width:217px;height:29px;border:2px solid #df3f39;box-sizing:border-box"></div>
</div></body></html>
